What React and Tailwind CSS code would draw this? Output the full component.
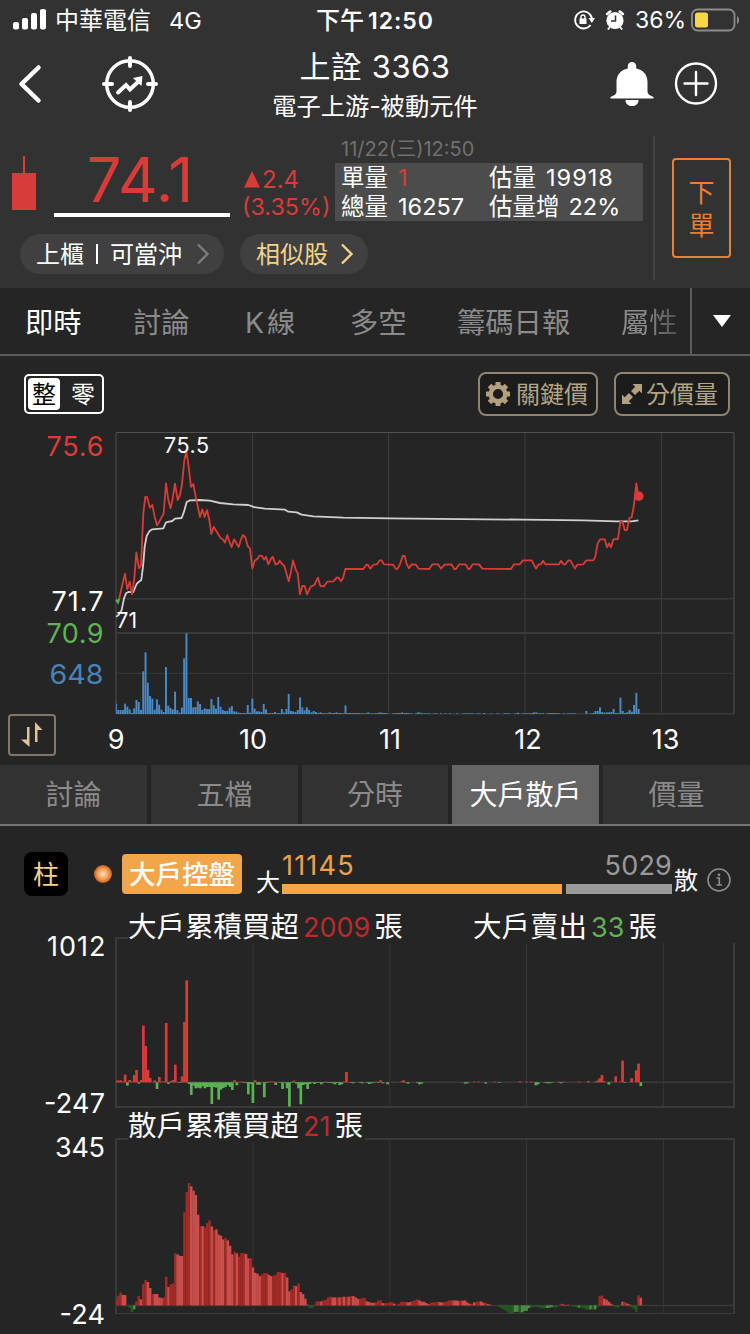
import React from "react";

const PRICE_A = [[358,714],[366,678],[375,641],[382,688],[389,665],[396,703],[403,655],[409,577],[417,625],[423,616],[430,460],[436,410],[441,412],[450,443],[457,435],[464,470],[471,496],[478,485],[491,460],[498,370],[505,420],[512,445],[518,415],[525,371],[533,420],[540,405],[546,373],[553,300],[559,274],[566,320],[573,381],[580,372],[587,410],[600,471],[607,448],[614,471],[621,450],[628,480],[634,522],[641,500],[662,535],[668,537],[675,548],[682,525],[689,548],[695,561],[702,538],[716,561],[723,538],[729,525],[736,532],[743,558],[750,565],[757,626],[764,602]];
const PRICE_B = [[22,597],[28,587],[36,588],[42,599],[48,590],[55,613],[62,598],[68,590],[76,613],[83,612],[89,602],[96,612],[103,618],[116,664],[123,635],[129,601],[137,628],[143,640],[150,703],[157,678],[164,678],[171,703],[182,680],[193,675],[204,653],[211,678],[222,679],[232,665],[250,664],[261,652],[266,653],[273,664],[279,655],[286,627],[340,627],[349,614],[354,615],[361,626],[370,614],[381,613],[389,601],[395,601],[402,613],[429,614],[438,627],[443,626],[449,615],[458,588],[464,588],[470,612],[477,625],[485,613],[498,614],[506,626],[538,627],[547,613],[564,613],[573,626],[584,614],[604,613],[613,627],[618,627],[628,613],[647,613],[655,627],[659,627],[668,613],[687,613],[697,626],[783,627],[792,613],[809,613],[819,601],[845,601],[858,626],[866,613],[873,613],[879,602],[886,613],[927,613],[933,602],[940,613],[946,613],[954,602],[961,601],[975,626],[982,614],[1000,613],[1009,601],[1030,601],[1036,590],[1043,550],[1050,538],[1064,538],[1071,562],[1077,550],[1083,562],[1090,538],[1104,537],[1111,486],[1118,486],[1124,510],[1131,510],[1138,474],[1145,472],[1152,435],[1159,370],[1165,408]];
const AVG_A = [[348,770],[356,765],[365,750],[372,715],[378,700],[385,696],[400,696],[410,672],[417,665],[424,660],[430,610],[434,560],[440,528],[448,514],[457,508],[490,505],[498,487],[517,483],[525,476],[545,474],[552,455],[560,426],[570,421],[600,420],[630,422],[660,429],[700,433],[745,435],[757,439]];
const AVG_B = [[10,441],[45,446],[105,449],[115,455],[140,457],[155,464],[190,469],[280,473],[420,475],[820,479],[1000,481],[1100,484],[1145,484],[1165,481]];

const toLine = (a, b) =>
  [...a, ...b.map(([x, y]) => [x + 750, y])]
    .map(([x, y]) => `${(x / 3).toFixed(2)},${(y / 3 - 72).toFixed(2)}`)
    .join(" ");

const expand = (start, sparse) => {
  const out = [...start];
  while (out.length < 231) out.push(0);
  Object.entries(sparse).forEach(([k, v]) => (out[k] = v));
  return out;
};

const VOLUME = expand(
  [31,12,12,12,31,22,14,3,17,42,36,12,128,185,94,54,46,13,44,28,13,6,141,25,18,14,67,12,4,19,167,242,48,48,20,21,38,30,12,17,15,15,45,26,16,51,22,12,9,9,19,24,8,7,4,3,3,3,27,4,46,16,8,8,6,30,14,3,3,3,6,3,3,15,4,15,60,9,8,6,12,50,20,11,20,12,5,9,6,3,5,3,2,2,5,3,3,5,3,3,2,26,3,3,3,3,3,3,2,2,2,5,2,2,2,3,5,4,3,3,0,0,2,3,3,3,5,3,3,2,2,0,2,5,4,2,2,2,2,0,2,2,0,2,0,2,0,2,0,0,2,0,0,2,2,2,2,2,0,2,2,0,3,0,0,2,0,0,2,0,0,2,2,2,0,0,2,4,0,2,2,2,2,3,5,5,2,2,2,0,2,3,3,3,3,2,0,2,0,2,2,2,2],
  { 207: 9, 209: 2, 210: 3, 211: 9, 212: 9, 213: 20, 214: 6, 215: 4, 216: 5, 217: 5, 218: 6, 219: 15, 220: 3, 221: 3, 222: 49, 223: 9, 224: 3, 225: 5, 226: 12, 227: 7, 228: 27, 229: 63, 230: 15 }
);

const BIG = expand(
  [6,5,6,2,23,-10,7,2,22,37,-4,7,170,109,37,13,1,6,-20,16,2,2,178,-5,3,7,53,1,-2,18,181,306,-5,-38,-10,-18,-16,-18,-12,-18,-14,-14,-65,-14,-16,-52,-22,-17,-14,-8,-14,-23,6,-9,1,2,-2,-2,-36,-5,-62,6,-7,-7,1,-45,-2,2,2,2,-8,1,-2,-20,-2,-18,-73,-2,5,-4,-18,-66,-8,-6,-20,-5,-2,-5,-2,-2,-6,-2,2,-2,-2,-3,-6,-2,-8,-6,2,31,1,-2,-3,1,0,-2,-3,0,-2,-5,-3,-2,2,-2,6,-3,0,-6],
  { 122: 1, 125: 2, 126: 6, 127: -1, 128: -4, 132: -2, 133: -6, 134: -4, 153: -4, 154: -3, 157: 2, 159: 2, 162: -4, 166: 2, 168: -2, 177: 3, 180: 2, 182: 2, 184: -9, 185: -6, 188: -2, 189: -3, 190: -3, 191: -2, 194: 2, 195: -3, 196: 2, 203: 2, 207: 4, 210: 2, 211: 5, 212: 12, 213: 22, 214: 3, 216: -7, 217: 2, 219: 18, 221: 2, 222: 65, 223: -2, 226: 12, 228: 36, 229: 56, 230: -11 }
);

/* "d" and "l" mark the dark and light shade of a bar. */
const SMALL =
  "20d 29d 39d 31l 31l -2d -8d -20d -12l 12d 28d 18l 64d 76d 70l 52l 34d 34l 34l 24l 22l 24d 86d 55l 63d 66d 156d 153l 149l 148l 279d 340d 367d 357l 344l 331l 272l 238d 238l 234d 247d 255d 237l 225d 228l 212l 209l 198l 202d 195l 179l 153l 161d 156l 146d 157d 157d 154l 141l 142d 114l 98l 95l 88l 92d 97d 97d 92l 88l 89d 92d 100d 100d 97l 98d 84l 42l 48d 60d 58l 66d 40l 34l 20l 2l -8d -8d 2d 12d 12d 12l 15d 17d 24d 26d 24l 24l 24d 24l 25d 26l 24d 26l 28d 28l 24l 20l 20d 22d 22d 12l 10l 8l 8l 9d 15d 15d 7l 7d 8d 9d 10d 5l -2d 5d 10d 11d 10d 9l 10l 13d 15d 18d 15l 11l 11l 7l 4l 8d 9d 9d 11d 10l 8l 10d 12d 15d 16d 15l 15l 14l 14d 14l 15l 9l 5l 4d 9l 11d 12d 12l 8l 8d 4l 2l 0l 0l -1d -5d -9d -12d -17d -22d -25d -23d -20l -19l -22d -21l -17l -16l -8l -6d -5d -4d -5d -8d -9d -8d -8l -7l -5l -6d -7d -2d 5d 3l 1l 2l 0l -3d -4d -6d -7l -7d -9d -12d -12d -12l -12d -12l -5d 28d 30d 20l 17l 11l 5l 1l -6d -7d -2d 11l 10d 6l 3l -6d -10d -19d 30d 23l"
    .split(" ")
    .map((s) => ({ v: parseInt(s, 10), light: s.endsWith("l") }));

function Bar({ i, v, base, pitch, width, fill }) {
  if (!v) return null;
  const h = Math.abs(v) / 3;
  const left = Math.max(116, 116 + i * pitch - width / 2);
  const right = 116 + i * pitch + width / 2;
  return <rect x={left} y={v > 0 ? base - h : base} width={right - left} height={h} fill={fill} />;
}

function PriceChart() {
  const hours = [252.5, 388.5, 525, 661.5];
  return (
    <svg width="750" height="333" viewBox="0 0 750 333" className="block overflow-visible" fontFamily="Inter, 'Liberation Sans', sans-serif">
      <g stroke="#3a3a3a" fill="none">
        <path d="M116 .5H734" stroke="#505050" />
        <path d="M116 1V282M734 1V282" strokeWidth="2" />
        {hours.map((x) => <path key={x} d={`M${x} 1V282`} strokeWidth="1.2" />)}
        <path d="M116 166.7H734M116 281.8H734" strokeWidth="1.4" />
        <path d="M116 201H734" strokeWidth="2" />
        <path d="M116 241.3H734" strokeWidth="1" />
      </g>
      {VOLUME.map((v, i) => <Bar key={i} i={i} v={v} base={282} pitch={2.2723} width={1.95} fill="#4a8ac6" />)}
      <polyline points={toLine(AVG_A, AVG_B)} fill="none" stroke="#d0d0d0" strokeWidth="1.8" strokeLinejoin="round" />
      <polyline points="116,167.5 118,170.5 119.3,166.5" fill="none" stroke="#5cb152" strokeWidth="2" />
      <polyline points={toLine(PRICE_A, PRICE_B)} fill="none" stroke="#db3b36" strokeWidth="1.8" strokeLinejoin="round" />
      <circle cx="638.8" cy="64.2" r="4.8" fill="#db3b36" />
      <g fontSize="27">
        <text x="46.500" y="24" fill="#d93d38" textLength="57">75.6</text>
        <text x="51.500" y="178.700" fill="#fff" textLength="52">71.7</text>
        <text x="46.500" y="211" fill="#5fb356" textLength="57">70.9</text>
        <text x="49.500" y="251.700" fill="#4783bb" textLength="54" lengthAdjust="spacingAndGlyphs">648</text>
      </g>
      <text x="164" y="21" fill="#fff" fontSize="21.500" textLength="45">75.5</text>
      <text x="116.500" y="195.700" fill="#fff" fontSize="21">71</text>
      <g fontSize="27" fill="#fff" textAnchor="middle">
        <text x="116" y="316.700">9</text>
        <text x="253" y="316.700">10</text>
        <text x="390" y="316.700">11</text>
        <text x="528" y="316.700">12</text>
        <text x="665.500" y="316.700">13</text>
      </g>
    </svg>
  );
}

function PanelCharts() {
  const hours = [253, 389.6, 526.5, 663.5];
  const gridOf = (top, bottom) => hours.map((x) => <path key={x} d={`M${x} ${top}V${bottom}`} strokeWidth="1" stroke="#343434" />);
  return (
    <svg width="750" height="424" viewBox="0 0 750 424" className="block" fontFamily="Inter, 'Liberation Sans', sans-serif">
      <g stroke="#3a3a3a" strokeWidth="2" fill="none">
        {gridOf(28, 197)}
        {gridOf(229, 403)}
        <path d="M116 28H734V197H116Z" />
        <path d="M116 172.200H734" strokeWidth="1.500" />
        <path d="M116 229H734V403.500M116 229V403.500" />
        <path d="M115 403.500H735" strokeWidth="1" />
        <path d="M116 395.500H734" strokeWidth="1.500" />
      </g>
      {BIG.map((v, i) => <Bar key={i} i={i} v={v} base={172.3} pitch={2.2817} width={2.7} fill={v > 0 ? "#d93b36" : "#5cb153"} />)}
      {SMALL.map((b, i) => (
        <Bar key={i} i={i} v={b.v} base={395.4} pitch={2.2817} width={2.5}
          fill={b.v > 0 ? (b.light ? "#ca4f4c" : "#a12a26") : b.light ? "#4f8d4b" : "#235a1e"} />
      ))}
      <g fontSize="27" fill="#fff">
        <text x="47" y="46" textLength="58.500">1012</text>
        <text x="44" y="202.700" textLength="61">-247</text>
        <text x="55" y="247" textLength="50">345</text>
        <text x="59.500" y="413.700" textLength="45.500">-24</text>
      </g>
    </svg>
  );
}

function StatusBar() {
  return (
    <div className="flex h-10 items-center text-white">
      <svg width="34" height="22" viewBox="0 0 34 22" fill="currentColor" className="ml-[13px]">
        <rect x="0" y="13" width="6" height="7.500" rx="2" />
        <rect x="9" y="9" width="6" height="11.500" rx="2" />
        <rect x="18" y="4" width="6" height="16.500" rx="2" />
        <rect x="27" y="0" width="6" height="20.500" rx="2" />
      </svg>
      <span className="ml-2 w-24 whitespace-nowrap pt-0.5 text-[24px] leading-10">中華電信</span>
      <span className="ml-[18px] w-[50px] pt-px text-[23.500px]">4G</span>
      <span className="ml-[97px] flex w-[118px] items-center whitespace-nowrap pt-px font-medium leading-10">
        <span className="w-[52px] text-[24px]">下午</span>
        <span className="text-[23px] font-semibold tracking-[1px]">12:50</span>
      </span>
      <svg width="22" height="22" viewBox="0 0 22 22" fill="none" stroke="currentColor" strokeWidth="1.800" className="ml-[139px]">
        <path d="M17.500 16A8.500 8.500 0 1 1 19 9.500" />
        <path d="M15.500 9H22L18.800 14Z" fill="currentColor" stroke="none" />
        <rect x="6.500" y="9.500" width="7" height="5.500" fill="currentColor" stroke="none" />
        <path d="M8 10V8a2 2 0 0 1 4 0v2" strokeWidth="1.400" />
      </svg>
      <svg width="20" height="20" viewBox="0 0 20 20" className="ml-2.5">
        <circle cx="10" cy="10.500" r="8.600" fill="#fff" />
        <path d="M2.200 4 5.200 1.600M17.800 4 14.800 1.600" stroke="#fff" strokeWidth="2.600" strokeLinecap="round" />
        <path d="M2.800 19.500 5 17M17.200 19.500 15 17" stroke="#fff" strokeWidth="1.800" />
        <path d="M10.500 5.500V11H6" fill="none" stroke="#323232" strokeWidth="1.500" />
      </svg>
      <span className="ml-[10px] w-[51px] pt-px text-[23px]">36%</span>
      <svg width="50" height="24" viewBox="0 0 50 24" className="ml-[5px]">
        <rect x="1" y="1.500" width="42.500" height="21" rx="5.500" fill="none" stroke="#8c8c8c" strokeWidth="1.800" />
        <rect x="4" y="4.500" width="13" height="15" rx="2.500" fill="#f8d747" />
        <path d="M46 8v8q2-1 2-4t-2-4Z" fill="#8c8c8c" />
      </svg>
    </div>
  );
}

function TitleBar() {
  return (
    <div className="flex h-[92px] items-start text-white">
      <svg width="24" height="40" viewBox="0 0 24 40" className="ml-[18px] mt-6" fill="none" stroke="currentColor" strokeWidth="4.500" strokeLinecap="round" strokeLinejoin="round">
        <path d="M20.500 3.500 3.500 20 20.500 36.500" />
      </svg>
      <svg width="56" height="56" viewBox="0 0 56 56" className="ml-[60px] mt-4" fill="none" stroke="currentColor" strokeWidth="4">
        <circle cx="28" cy="28" r="23.300" strokeWidth="3.500" />
        <path d="M28 2V10M28 46V54M2 28H10M46 28H54" strokeLinecap="round" />
        <path d="M16 36.500 24 29 28 33.500 37 25" strokeLinecap="round" />
        <path d="M40.500 20 39.500 30 31 22Z" fill="currentColor" stroke="none" />
      </svg>
      <div className="ml-[72px] mt-[5px] w-[290px] text-center">
        <div className="text-[31px] leading-[44px] tracking-[0.5px]">上詮 3363</div>
        <div className="text-[24.300px] leading-[34px]">電子上游-被動元件</div>
      </div>
      <svg width="44" height="46" viewBox="0 0 44 46" className="ml-[90px] mt-[21px]" fill="currentColor">
        <path d="M22 1c-2.500 0-4.200 1.800-4.200 4v2.500C10.500 9 6.500 14 6.500 21v9.500c0 2.500-2 4-6 5.500v1.500h43V36c-4-1.500-6-3-6-5.500V21c0-7-4-12-11.300-13.500V5c0-2.200-1.700-4-4.200-4Z" />
        <path d="M15.500 39h13c0 4-3 6-6.500 6s-6.500-2-6.500-6Z" />
      </svg>
      <svg width="44" height="44" viewBox="0 0 44 44" className="ml-5 mt-[21px]" fill="none" stroke="currentColor" strokeWidth="2.400">
        <circle cx="22" cy="22.500" r="20" />
        <path d="M22 11V34M10.500 22.500H33.500" strokeLinecap="round" />
      </svg>
    </div>
  );
}

function Chevron({ className }) {
  return (
    <svg width="14" height="22" viewBox="0 0 14 22" className={className} fill="none" stroke="currentColor" strokeWidth="2.400">
      <path d="M2 1.500 11.500 11 2 20.500" />
    </svg>
  );
}

function Stat({ label, children }) {
  return (
    <span className="flex">
      <span>{label}</span>
      {children}
    </span>
  );
}

function Quote() {
  return (
    <div className="flex h-[156px]">
      <div className="w-[653px]">
        <div className="flex h-[102px]">
          <svg width="24" height="56" viewBox="0 0 24 56" className="ml-3 mt-[23px]" fill="#d93c38">
            <rect x="11" y="1" width="2" height="20" />
            <rect x="0" y="18" width="24" height="37" />
          </svg>
          <div className="ml-[18px] mt-[15px] h-[70px] w-44 border-b-4 border-white pr-1 text-center text-[61.500px] leading-[65px] text-[#d93c38]">74.1</div>
          <div className="ml-[14px] mt-[34px] w-[91px] text-[24px] leading-[27px] text-[#d93c38]">
            <div className="flex items-center">
              <svg width="16" height="17" viewBox="0 0 16 17" fill="currentColor"><path d="M8 0 16 16.500H0Z" /></svg>
              <span className="ml-[2px]">2.4</span>
            </div>
            <div className="-ml-0.5 whitespace-nowrap text-[23.300px]">(3.35%)</div>
          </div>
          <div className="mt-[3px] w-[308px] whitespace-nowrap">
            <div className="pl-1.5 text-[20px] leading-7 text-[#707070]">11/22(三)12:50</div>
            <div className="grid h-[58px] grid-cols-[148px_1fr] bg-[#4c4c4c] pl-1.5 text-[23.500px] leading-[29px] text-white">
              <Stat label="單量"><span className="ml-[10px] text-[#d93c38]">1</span></Stat>
              <Stat label="估量"><span className="ml-[10px] tracking-[1px]">19918</span></Stat>
              <Stat label="總量"><span className="ml-[10px]">16257</span></Stat>
              <Stat label="估量增"><span className="ml-[9px]">22%</span></Stat>
            </div>
          </div>
        </div>
        <div className="flex gap-4 pl-5 text-[24px] leading-10">
          <div className="flex h-10 w-[204px] items-center rounded-full bg-[#404040] pl-4 text-white">
            <span className="w-12 pt-0.5">上櫃</span>
            <span className="ml-3 h-5 w-0.5 bg-white" />
            <span className="ml-3 w-[72px] pt-0.5">可當沖</span>
            <Chevron className="ml-[14px] text-[#7c7c7c]" />
          </div>
          <div className="flex h-10 w-32 items-center rounded-full bg-[#404040] pl-4 text-[#f3d28c]">
            <span className="w-[72px] pt-0.5">相似股</span>
            <Chevron className="ml-[12px]" />
          </div>
        </div>
      </div>
      <div className="mt-1 h-36 w-0.5 bg-[#444]" />
      <div className="ml-[17px] mt-[26px] flex h-[100px] w-[59px] flex-col items-center justify-center rounded border-2 border-[#ea7f31] pt-0.5 text-[26px] leading-[33px] text-[#ea7f31]">
        <span>下</span>
        <span>單</span>
      </div>
    </div>
  );
}

function MainTabs() {
  return (
    <div className="flex h-[68px] border-b-2 border-[#5c5c5c] text-[28.300px] leading-[66px] text-[#8b8b8b]">
      <div className="flex w-[690px] overflow-hidden whitespace-nowrap pl-[25px] pt-0.5">
        <span className="w-[108px] text-white">即時</span>
        <span className="w-[112px]">討論</span>
        <span className="w-[105px]">K<span className="ml-[3px]">線</span></span>
        <span className="w-[107px]">多空</span>
        <span className="w-[164px]">籌碼日報</span>
        <span className="bg-linear-to-r from-[#8b8b8b] from-45% to-[#4c4c4c] bg-clip-text text-transparent">屬性</span>
      </div>
      <div className="flex flex-1 items-center border-l-2 border-[#5c5c5c] pl-[21px]">
        <svg width="18" height="12" viewBox="0 0 18 12" fill="#fff"><path d="M0 0H18L9 12Z" /></svg>
      </div>
    </div>
  );
}

function GearIcon() {
  return (
    <svg width="24" height="24" viewBox="0 0 24 24" fill="none" stroke="#b3a081">
      <circle cx="12" cy="12" r="7.300" strokeWidth="4.500" />
      <path d="M12 0V4M12 20V24M0 12H4M20 12H24M3.500 3.500 6.300 6.300M17.700 17.700 20.500 20.500M20.500 3.500 17.700 6.300M6.300 17.700 3.500 20.500" strokeWidth="5" />
    </svg>
  );
}

function Toolbar() {
  return (
    <div className="flex h-[76px] items-start pt-4 text-[24px]">
      <div className="ml-6 mt-0.5 flex h-10 w-20 items-center rounded-[5px] border-2 border-white pl-0.5 leading-[34px] text-white">
        <span className="h-8 w-8 rounded bg-white text-center text-black">整</span>
        <span className="ml-[7px] h-8 w-8 text-center">零</span>
      </div>
      <div className="ml-[374px] flex h-11 w-[120px] items-center rounded-lg border-2 border-[#8f8471] bg-[#1c1c1c] pl-1.5 text-[#b3a588]">
        <GearIcon />
        <span className="ml-1.5 whitespace-nowrap pt-0.5 leading-10">關鍵價</span>
      </div>
      <div className="ml-4 flex h-11 w-[116px] items-center rounded-lg border-2 border-[#8f8471] bg-[#1c1c1c] pl-1.5 text-[#b3a588]">
        <svg width="20" height="20" viewBox="0 0 20 20" fill="#b3a081">
          <path d="M10.500 0H20V9.500L17.300 6.800 13 11 9 7 13.200 2.700Z" />
          <path d="M9.500 20H0V10.500L2.700 13.200 7 9 11 13 6.800 17.300Z" />
          <path d="M7 7 13 13" stroke="#1c1c1c" strokeWidth="2" />
        </svg>
        <span className="ml-1 whitespace-nowrap pt-0.5 leading-10">分價量</span>
      </div>
    </div>
  );
}

function SubTabs() {
  return (
    <div className="grid h-[61px] grid-cols-[147px_147px_146px_147px_147px] gap-1 border-b-2 border-[#747474] text-center text-[28px] leading-[57px] text-[#8b8b8b]">
      <span className="bg-[#323232] pt-0.5">討論</span>
      <span className="bg-[#323232] pt-0.5">五檔</span>
      <span className="bg-[#323232] pt-0.5">分時</span>
      <span className="bg-[#646464] pt-0.5 text-white">大戶散戶</span>
      <span className="bg-[#323232] pt-0.5">價量</span>
    </div>
  );
}

function Holders() {
  return (
    <div>
      <div className="flex h-[84px] items-start whitespace-nowrap text-white">
        <span className="ml-6 mt-[26px] h-11 w-11 rounded-lg bg-black text-center text-[26px] leading-[46px] text-[#f3d28c]">柱</span>
        <svg width="18" height="18" viewBox="0 0 18 18" className="ml-[26px] mt-[39px]">
          <defs>
            <radialGradient id="dot">
              <stop offset="0" stopColor="#ffe2ba" />
              <stop offset="0.650" stopColor="#f0954c" />
              <stop offset="1" stopColor="#c55f23" />
            </radialGradient>
          </defs>
          <circle cx="9" cy="9" r="9" fill="url(#dot)" />
        </svg>
        <span className="ml-2.5 mt-7 h-10 w-[120px] rounded bg-[#f2a64a] text-center text-[26.500px] font-medium leading-[41px]">大戶控盤</span>
        <span className="ml-[14px] mt-10 w-[26px] text-[24px] leading-[34px]">大</span>
        <div className="mt-[22px] w-[390px]">
          <div className="flex justify-between text-[27px] leading-9">
            <span className="tracking-[1.2px] text-[#eda24a]">11145</span>
            <span className="tracking-[0.2px] text-[#999]">5029</span>
          </div>
          <div className="flex h-2.5 gap-1">
            <span className="w-[280px] bg-[#f2a64a]" />
            <span className="flex-1 bg-[#9a9a9a]" />
          </div>
        </div>
        <span className="ml-0.5 mt-[38px] w-6 text-[24px] leading-[34px]">散</span>
        <svg width="26" height="26" viewBox="0 0 26 26" className="ml-2 mt-[41px]" fill="none" stroke="#8d8d8d">
          <circle cx="13" cy="13" r="11" strokeWidth="1.600" />
          <path d="M10.500 11H13.300V18M10.500 18H16" strokeWidth="1.600" />
          <circle cx="13" cy="7.800" r="1.400" fill="#8d8d8d" stroke="none" />
        </svg>
      </div>
      <div className="relative">
        <PanelCharts />
        <div className="absolute left-32 top-0 flex h-[33px] w-[622px] whitespace-nowrap bg-[#252525] text-[28.500px] leading-[34px] text-white">
          <span className="w-[345px]">大戶累積買超<span className="mx-1 text-[27px] text-[#bc2b2b]">2009</span>張</span>
          <span>大戶賣出<span className="mx-1 text-[27px] text-[#5fb356]">33</span>張</span>
        </div>
        <div className="absolute left-32 top-[199px] h-[33px] w-[237px] whitespace-nowrap bg-[#252525] text-[28.500px] leading-[34px] text-white">
          散戶累積買超<span className="mx-1 text-[27px] text-[#bc2b2b]">21</span>張
        </div>
      </div>
    </div>
  );
}

export default function App() {
  return (
    <div className="h-[1334px] w-[750px] overflow-hidden bg-[#252525] font-['Inter','Noto_Sans_CJK_TC',sans-serif] font-[380]">
      <header className="h-[288px] bg-[#323232]">
        <StatusBar />
        <TitleBar />
        <Quote />
      </header>
      <MainTabs />
      <Toolbar />
      <div className="relative">
        <PriceChart />
        <button className="absolute left-2 top-[282px] flex h-[42px] w-12 items-center justify-center rounded border-2 border-[#82786a]" aria-label="swap">
          <svg width="22" height="26" viewBox="0 0 22 26" fill="#dcc59e">
            <path d="M6 5H8.500V25L0 17.500H6Z" />
            <path d="M16.500 20H14V0L21.500 8H16.500Z" />
          </svg>
        </button>
      </div>
      <SubTabs />
      <Holders />
    </div>
  );
}
